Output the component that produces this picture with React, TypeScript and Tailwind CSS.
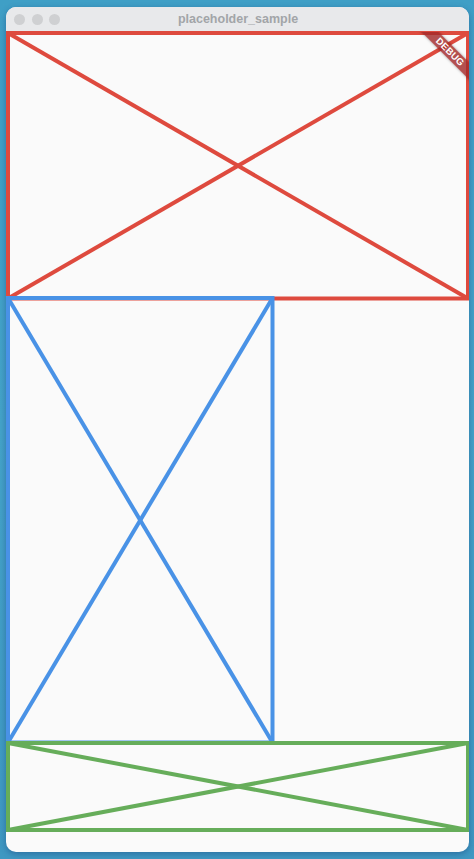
import React from "react";

function PlaceholderBox({ color, className }: { color: string; className: string }) {
  return (
    <div className={className}>
      <svg
        className="block w-full h-full overflow-visible"
        viewBox="0 0 100 100"
        preserveAspectRatio="none"
      >
        <g stroke={color} strokeWidth={4} fill="none" vectorEffect="non-scaling-stroke">
          <rect x="0" y="0" width="100" height="100" vectorEffect="non-scaling-stroke" />
          <line x1="0" y1="0" x2="100" y2="100" vectorEffect="non-scaling-stroke" />
          <line x1="100" y1="0" x2="0" y2="100" vectorEffect="non-scaling-stroke" />
        </g>
      </svg>
    </div>
  );
}

export default function App() {
  return (
    <div
      className="w-[474px] h-[859px] bg-[linear-gradient(180deg,#3f9fc6,#45a3c9_50%,#3f98c2)] pl-[6px] pt-[7px]"
      style={{ fontFamily: '"Liberation Sans", Arial, sans-serif' }}
    >
      <div className="w-[463px] h-[845px] rounded-[10px] overflow-hidden bg-[#fafafa] flex flex-col shadow-[0_2px_6px_rgba(20,60,120,0.45)]">
        {/* Title bar */}
        <div className="h-[25px] shrink-0 bg-[#e8e9eb] flex items-center relative">
          <div className="flex items-center gap-[6.5px] pl-[8px]">
            <span className="block w-[11px] h-[11px] rounded-full bg-[#cfd0d2]" />
            <span className="block w-[11px] h-[11px] rounded-full bg-[#cfd0d2]" />
            <span className="block w-[11px] h-[11px] rounded-full bg-[#cfd0d2]" />
          </div>
          <div className="absolute inset-0 flex items-center justify-center text-[12.5px] font-bold text-[#a2a5a8] pl-[1px]">
            placeholder_sample
          </div>
        </div>
        {/* Content */}
        <div className="relative flex-1 flex flex-col pt-[0.5px] px-[1.5px]">
          <PlaceholderBox color="#de4a3e" className="h-[265.5px] w-full shrink-0" />
          <PlaceholderBox color="#4992e6" className="h-[444.5px] w-[264.5px] shrink-0" />
          <PlaceholderBox color="#66ad5a" className="h-[87px] w-full shrink-0" />
          <div className="absolute inset-0 overflow-hidden pointer-events-none">
            <div className="absolute top-[14px] right-[-31px] w-[100px] h-[12px] rotate-45 bg-[#a32a2ad0] shadow-[0_0_3px_rgba(0,0,0,0.35)] flex items-center justify-center">
              <span className="text-[9.5px] leading-none font-bold text-white tracking-[0.3px]">DEBUG</span>
            </div>
          </div>
        </div>
      </div>
    </div>
  );
}
